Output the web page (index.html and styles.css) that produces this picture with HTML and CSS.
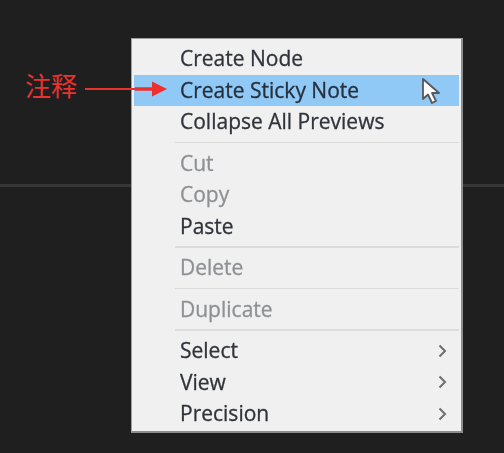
FILE: index.html
```html
<!DOCTYPE html>
<html lang="en">
<head>
    <meta charset="UTF-8">
    <title>Context Menu</title>
    <link rel="stylesheet" href="styles.css">
</head>
<body>
    <div class="canvas-line"></div>

    <div class="note-label">注释</div>
    <svg class="note-arrow" width="84" height="20" viewBox="0 0 84 20">
        <path d="M0 10H56" stroke="#e8322e" stroke-width="2" fill="none"/>
        <path d="M50 10L67 10" stroke="#ee2f2b" stroke-width="3.500" fill="none"/>
        <path d="M67 2.500L82 10L67 17.500Z" fill="#f0302c"/>
    </svg>

    <div class="menu">
        <div class="item">Create Node</div>
        <div class="item active">Create Sticky Note</div>
        <div class="item">Collapse All Previews</div>
        <div class="separator"></div>
        <div class="item disabled">Cut</div>
        <div class="item disabled">Copy</div>
        <div class="item">Paste</div>
        <div class="separator"></div>
        <div class="item disabled">Delete</div>
        <div class="separator"></div>
        <div class="item disabled">Duplicate</div>
        <div class="separator"></div>
        <div class="item submenu">Select <svg class="chevron" width="9" height="14" viewBox="0 0 9 14"><path d="M1.500 1.500L7 7L1.500 12.500" stroke="#6e6e6e" stroke-width="2" fill="none"/></svg></div>
        <div class="item submenu">View <svg class="chevron" width="9" height="14" viewBox="0 0 9 14"><path d="M1.500 1.500L7 7L1.500 12.500" stroke="#6e6e6e" stroke-width="2" fill="none"/></svg></div>
        <div class="item submenu">Precision <svg class="chevron" width="9" height="14" viewBox="0 0 9 14"><path d="M1.500 1.500L7 7L1.500 12.500" stroke="#6e6e6e" stroke-width="2" fill="none"/></svg></div>

        <svg class="cursor" width="22" height="28" viewBox="0 0 22 28">
            <path d="M2 2V22L7 17.500L11 26L15 24L11 16H18Z" fill="#fff" stroke="#55585c" stroke-width="1.800" stroke-linejoin="round"/>
        </svg>
    </div>
</body>
</html>
```

FILE: styles.css
```css
body {
    margin: 0;
    width: 504px;
    height: 453px;
    position: relative;
    overflow: hidden;
    background-color: #1f1f1f;
    font-family: "Open Sans", "Noto Sans CJK SC", sans-serif;
}

.canvas-line {
    margin-top: 184px;
    height: 3px;
    background-color: #363636;
}

.note-label {
    position: absolute;
    left: 25px;
    top: 67px;
    color: #e8332e;
    font-family: "Noto Sans CJK SC", sans-serif;
    font-size: 26px;
    line-height: 36px;
}

.note-arrow {
    position: absolute;
    left: 85px;
    top: 79px;
    z-index: 2;
}

.menu {
    position: absolute;
    left: 131px;
    top: 38px;
    width: 332px;
    height: 395px;
    box-sizing: border-box;
    padding: 4px 2px 0;
    background-color: #f0f0f0;
    border: 1px solid #a0a0a0;
    border-bottom: 2px solid #8c8c8c;
    border-right: 2px solid #8c8c8c;
    filter: blur(0.4px);
}

.item {
    height: 31.5px;
    line-height: 31.5px;
    padding: 0 12px 0 46px;
    display: flex;
    justify-content: space-between;
    align-items: center;
    font-size: 21px;
    color: #30343a;
    -webkit-text-stroke: 0.3px;
}

.active {
    background-color: #90c8f6;
    color: #26303c;
}

.disabled {
    color: #8e9094;
}

.separator {
    height: 1.5px;
    margin: 4px 0 4.5px 41px;
    background-color: #dcdcdc;
}

.cursor {
    position: absolute;
    left: 289px;
    top: 38px;
}
```
